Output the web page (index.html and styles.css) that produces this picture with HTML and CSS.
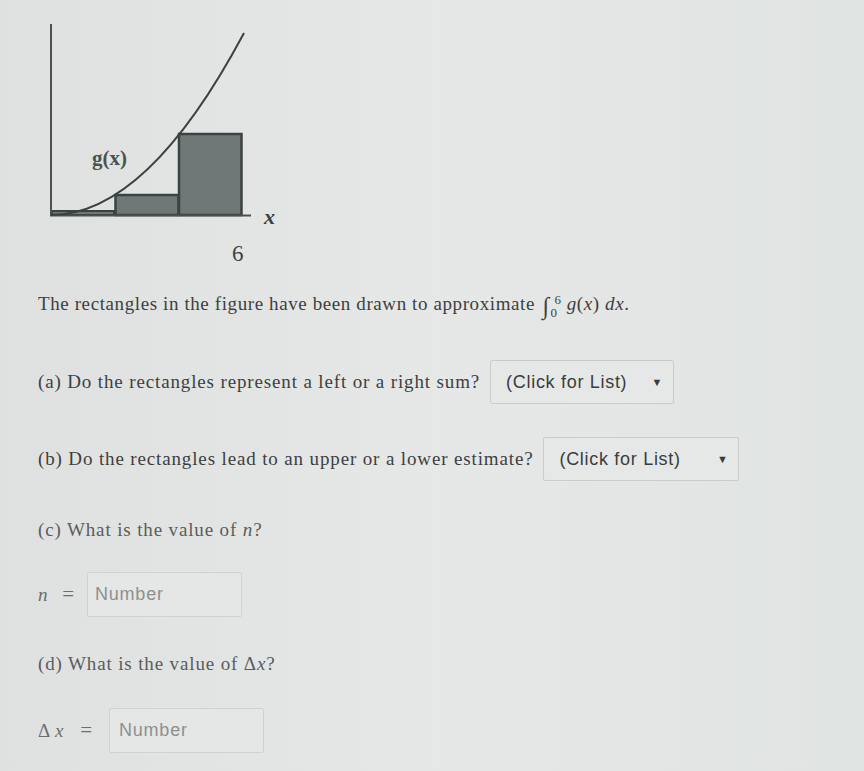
FILE: index.html
```html
<!DOCTYPE html>
<html>
<head>
<meta charset="utf-8">
<link rel="stylesheet" href="styles.css">
</head>
<body>
<div class="page">
  <svg class="figure" width="300" height="268" viewBox="0 0 300 268">
    <rect x="52" y="211" width="62" height="4" fill="#6f7876" stroke="#3b4342" stroke-width="2"/>
    <rect x="115.5" y="195" width="63" height="20" fill="#6f7876" stroke="#3b4342" stroke-width="2.5"/>
    <rect x="179" y="134" width="62.5" height="81" fill="#6f7876" stroke="#3b4342" stroke-width="2.5"/>
    <line x1="51" y1="24" x2="51" y2="216" stroke="#4a5250" stroke-width="2"/>
    <line x1="50" y1="215.5" x2="251" y2="215.5" stroke="#4a5250" stroke-width="2"/>
    <path d="M51 215 Q 147 215, 244 33" fill="none" stroke="#3b4342" stroke-width="2"/>
    <text x="92" y="165" class="glabel">g(x)</text>
    <text x="264" y="224" class="xlabel">x</text>
    <text x="232" y="261" class="six">6</text>
  </svg>
  <div class="content">
    <p class="intro">The rectangles in the figure have been drawn to approximate <span class="integral"><span class="int">∫</span><span class="limits"><span class="sup">6</span><span class="sub">0</span></span></span><i class="mi">g</i>(<i class="mi">x</i>) <i class="mi">dx</i>.</p>

    <div class="row row-a">
      <span class="q">(a) Do the rectangles represent a left or a right sum?</span>
      <div class="select sel-a"><span>(Click for List)</span><span class="tri">▼</span></div>
    </div>

    <div class="row row-b">
      <span class="q">(b) Do the rectangles lead to an upper or a lower estimate?</span>
      <div class="select sel-b"><span>(Click for List)</span><span class="tri">▼</span></div>
    </div>

    <p class="q qc">(c) What is the value of <i class="mi">n</i>?</p>
    <div class="row row-n">
      <span class="lhs"><i class="mi">n</i><span class="eq">=</span></span>
      <div class="input in-n">Number</div>
    </div>

    <p class="q qd">(d) What is the value of Δ<i class="mi">x</i>?</p>
    <div class="row row-dx">
      <span class="lhs lhs-dx"><span class="delta">Δ</span><i class="mi">x</i><span class="eq">=</span></span>
      <div class="input in-dx">Number</div>
    </div>
  </div>
</div>
</body>
</html>
```

FILE: styles.css
```css
html, body {
  margin: 0;
  padding: 0;
  background: #e2e4e3;
}
.page {
  width: 864px;
  height: 771px;
  overflow: hidden;
  background: linear-gradient(90deg, #dfe1e0 0%, #e6e8e7 50%, #e0e4e2 100%);
  font-family: "Liberation Serif", "Times New Roman", serif;
  color: #3d3f3f;
}
.figure {
  display: block;
}
.glabel {
  font-family: "Liberation Serif", serif;
  font-size: 21px;
  font-weight: bold;
  fill: #4a5250;
}
.xlabel {
  font-family: "Liberation Serif", serif;
  font-style: italic;
  font-weight: bold;
  font-size: 22px;
  fill: #3b4342;
}
.six {
  font-family: "Liberation Serif", serif;
  font-size: 23px;
  fill: #3b4342;
}
.content {
  padding-left: 38px;
  margin-top: 22px;
}
.intro {
  margin: 0;
  font-size: 19px;
  letter-spacing: 0.6px;
  line-height: 28px;
  height: 28px;
  white-space: nowrap;
}
.integral {
  display: inline-flex;
  align-items: center;
  vertical-align: middle;
  margin-left: 2px;
}
.int {
  font-size: 24px;
  font-style: italic;
}
.limits {
  display: inline-flex;
  flex-direction: column;
  font-size: 13px;
  line-height: 13px;
  margin-left: 1px;
  margin-right: 5px;
}
.sup { margin-left: 4px; }
.mi {
  font-style: italic;
}
.row {
  display: flex;
  align-items: center;
  white-space: nowrap;
}
.q {
  font-size: 19px;
  letter-spacing: 0.86px;
  margin: 0;
  white-space: nowrap;
}
.row-a {
  margin-top: 42px;
}
.row-b {
  margin-top: 33px;
}
.select {
  display: flex;
  align-items: center;
  justify-content: space-between;
  box-sizing: border-box;
  height: 44px;
  border: 1px solid #c9cccb;
  border-radius: 2px;
  background: #e6e8e7;
  font-family: "Liberation Sans", Arial, sans-serif;
  font-size: 18px;
  letter-spacing: 0.7px;
  color: #3a3c3c;
  padding: 0 10px 0 15px;
}
.sel-a {
  width: 184px;
  margin-left: 10px;
}
.sel-b {
  width: 196px;
  margin-left: 10px;
}
.tri {
  font-size: 11px;
  color: #3a3c3c;
}
.qc {
  margin-top: 38px;
}
.qd {
  margin-top: 36px;
}
.row-n {
  margin-top: 31px;
}
.row-dx {
  margin-top: 33px;
}
.lhs {
  font-size: 19px;
  letter-spacing: 0.8px;
  color: #6b6e6d;
  margin-right: 12px;
}
.lhs-dx {
  margin-right: 16px;
}
.delta {
  margin-right: 4px;
}
.eq {
  margin-left: 14px;
  font-size: 21px;
}
.lhs-dx .eq {
  margin-left: 16px;
}
.input {
  box-sizing: border-box;
  width: 155px;
  height: 45px;
  border: 1px solid #cfd2d1;
  border-radius: 2px;
  background: #e5e7e6;
  font-family: "Liberation Sans", Arial, sans-serif;
  font-size: 18px;
  letter-spacing: 0.8px;
  color: #8d908f;
  display: flex;
  align-items: center;
  padding-left: 7px;
}
.in-dx {
  padding-left: 9px;
}
.qc, .qd {
  color: #5a5c5c;
}
```
